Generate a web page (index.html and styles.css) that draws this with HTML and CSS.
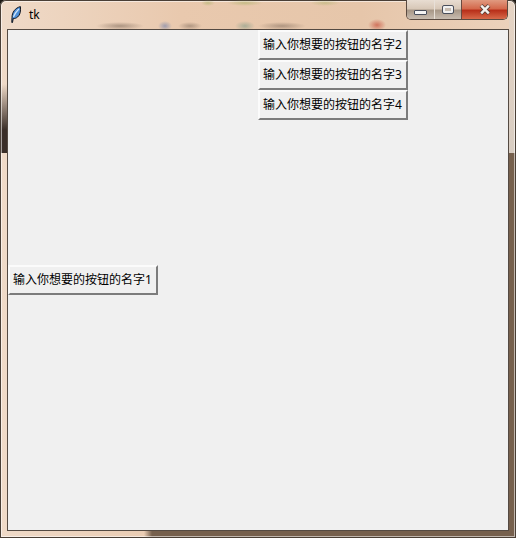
FILE: index.html
```html
<!DOCTYPE html>
<html lang="zh">
<head>
  <meta charset="UTF-8">
  <title>tk</title>
  <link rel="stylesheet" href="styles.css">
</head>
<body>
  <div class="window">
    <div class="titlebar">
      <svg class="app-icon" width="10" height="17" viewBox="0 0 10 17">
        <path d="M0.8 16.5 L1 11.5 C1 6.5 4 2 9.4 0.6 C9.9 5 9.2 9 6.6 11 C5.2 12.2 3.6 12.6 2.2 12.6 L1.5 16.5 Z" fill="#4d8fd8" stroke="#10141c" stroke-width="1"/>
        <path d="M2.4 11 C3.6 8 5.4 5.5 7.8 3" fill="none" stroke="#cfe4f8" stroke-width="1.2"/>
      </svg>
      <span class="title">tk</span>
      <div class="controls">
        <div class="control minimize"><span class="min-glyph"></span></div>
        <div class="control maximize"><span class="max-glyph"></span></div>
        <div class="control close">
          <svg width="12" height="11" viewBox="0 0 12 11">
            <path d="M2 1.5 L10 9.5 M10 1.5 L2 9.5" fill="none" stroke="#5a4038" stroke-width="4"/>
            <path d="M2.2 1.7 L9.8 9.3 M9.8 1.7 L2.2 9.3" fill="none" stroke="#f4f1ee" stroke-width="2.4"/>
          </svg>
        </div>
      </div>
    </div>
    <div class="client">
      <div class="stack">
        <button class="tk-btn">输入你想要的按钮的名字2</button>
        <button class="tk-btn">输入你想要的按钮的名字3</button>
        <button class="tk-btn">输入你想要的按钮的名字4</button>
      </div>
      <button class="tk-btn first">输入你想要的按钮的名字1</button>
    </div>
  </div>
</body>
</html>
```

FILE: styles.css
```css
html, body {
  margin: 0;
  padding: 0;
}
body {
  width: 516px;
  height: 538px;
  overflow: hidden;
  background: #1c1814;
}
.window {
  width: 516px;
  height: 538px;
  box-sizing: border-box;
  display: flex;
  flex-direction: column;
  border-radius: 6px 6px 0 0;
  box-shadow: inset 0 0 0 1px #4a3f36, inset 0 0 0 2px rgba(255, 255, 255, 0.55);
  background:
    linear-gradient(to bottom, rgba(50, 40, 34, 0) 55%, #3a2e28 85%, #3a2e28) 0 0 / 7px 153px no-repeat,
    linear-gradient(#76604d, #76604d) right bottom / 7px 385px no-repeat,
    linear-gradient(to right, rgba(118, 96, 77, 0), #76604d 8px) 144px bottom / 372px 8px no-repeat,
    linear-gradient(to bottom, #e6d4c4, #d8cdc2) right top / 7px 153px no-repeat,
    linear-gradient(to right, #efdac8, #e9c9ae 35%, #e6c6aa 70%, #ecd2bc);
}
.titlebar {
  height: 29px;
  flex: none;
  display: flex;
  align-items: flex-start;
  background:
    radial-gradient(ellipse 24px 4px at 120px 26px, rgba(120, 100, 85, 0.55), transparent),
    radial-gradient(ellipse 7px 5px at 165px 26px, rgba(110, 125, 170, 0.6), transparent),
    radial-gradient(ellipse 12px 4px at 190px 26px, rgba(120, 100, 85, 0.5), transparent),
    radial-gradient(ellipse 10px 5px at 245px 26px, rgba(130, 155, 135, 0.6), transparent),
    radial-gradient(ellipse 24px 4px at 282px 26px, rgba(120, 100, 85, 0.5), transparent),
    radial-gradient(ellipse 9px 6px at 377px 25px, rgba(200, 80, 60, 0.7), transparent),
    radial-gradient(ellipse 7px 3px at 208px 3px, rgba(175, 180, 110, 0.6), transparent),
    radial-gradient(ellipse 18px 3px at 245px 3px, rgba(175, 180, 110, 0.6), transparent),
    radial-gradient(ellipse 15px 3px at 325px 3px, rgba(175, 180, 110, 0.5), transparent);
}
.app-icon {
  margin: 6px 0 0 11px;
}
.title {
  margin: 7px 0 0 8px;
  font: 12px/16px "Noto Sans", sans-serif;
  color: #000;
}
.controls {
  margin-left: auto;
  margin-right: 8px;
  display: flex;
  height: 20px;
  box-sizing: border-box;
  border: 1px solid #5a4a40;
  border-top: none;
  border-radius: 0 0 5px 5px;
  overflow: hidden;
}
.control {
  display: flex;
  align-items: center;
  justify-content: center;
  box-sizing: border-box;
}
.minimize {
  width: 28px;
  border-right: 1px solid #e8e0d8;
  background: linear-gradient(#e8ddd2, #d8c8b8 45%, #a89888 55%, #c8bcb0);
}
.maximize {
  width: 27px;
  border-right: 1px solid #6a4a40;
  background: linear-gradient(#e8ddd2, #d8c8b8 45%, #a89888 55%, #c8bcb0);
}
.close {
  width: 45px;
  background: linear-gradient(#e09a80, #d4694c 45%, #b8301a 55%, #d86a4a);
}
.min-glyph {
  width: 11px;
  height: 3px;
  margin-top: 6px;
  background: #f4f4f4;
  border: 1px solid #4a4f5c;
  border-radius: 1px;
}
.max-glyph {
  width: 6px;
  height: 3px;
  margin-bottom: 1px;
  background: #c8bcb0;
  border: 2px solid #f0f0f0;
  outline: 1px solid #4a4f5c;
  outline-offset: 0;
  border-radius: 1px;
}
.client {
  flex: 1;
  margin: 0 7px 7px;
  background: #f0f0f0;
  border: 1px solid #544a42;
  display: flex;
  flex-direction: column;
  align-items: flex-start;
}
.stack {
  display: flex;
  flex-direction: column;
  margin-left: 250px;
}
.tk-btn {
  width: 150px;
  height: 30px;
  padding: 0 1px 0 0;
  box-sizing: border-box;
  background: #f0f0f0;
  color: #000;
  border: 2px solid;
  border-color: #fbfbfb #7c7c7c #7c7c7c #fbfbfb;
  font: 12px/16px "Noto Sans", "Noto Sans CJK SC", sans-serif;
  white-space: nowrap;
}
.first {
  margin-top: 145px;
}
```
